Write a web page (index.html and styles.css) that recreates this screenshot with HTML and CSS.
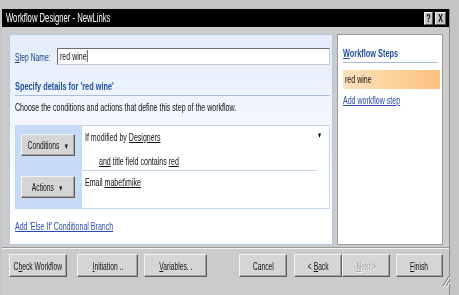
FILE: index.html
```html
<!DOCTYPE html>
<html lang="en">
<head>
  <meta charset="UTF-8" />
  <title>Workflow Designer - NewLinks</title>
  <link rel="stylesheet" href="styles.css">
</head>
<body>
  <div class="window">
    <div class="titlebar">
      <span class="title"><span class="sq">Workflow Designer - NewLinks</span></span>
      <span class="cap-btn cap-help"><span class="sq">?</span></span>
      <span class="cap-btn cap-close"><span class="sq">X</span></span>
    </div>

    <div class="client">
      <div class="panes">
        <div class="main-pane">
          <div class="step-row">
            <label class="step-label"><span class="sq"><u>S</u>tep Name:</span></label>
            <div class="step-input"><span class="sq">red wine<span class="caret"></span></span></div>
          </div>

          <h2 class="section-title"><span class="sq">Specify details for 'red wine'</span></h2>
          <p class="hint"><span class="sq">Choose the conditions and actions that define this step of the workflow.</span></p>

          <div class="rules">
            <div class="rule-row rule-conditions">
              <div class="rule-side">
                <span class="btn rule-btn"><span class="sq">Conditions <span class="tri">▼</span></span></span>
              </div>
              <div class="rule-body">
                <div class="rule-lines">
                  <div class="rule-line"><span class="sq">If modified by <u>Designers</u></span></div>
                  <div class="rule-line rule-sub"><span class="sq"><u>and</u> title field contains <u>red</u></span></div>
                </div>
                <span class="rule-menu"><span class="sq">▼</span></span>
              </div>
            </div>
            <div class="rule-row rule-actions">
              <div class="rule-side">
                <span class="btn rule-btn"><span class="sq">Actions <span class="tri">▼</span></span></span>
              </div>
              <div class="rule-body">
                <div class="rule-line"><span class="sq">Email <u>mabet\mike</u></span></div>
              </div>
            </div>
          </div>

          <a class="link branch-link" href="#"><span class="sq">Add 'Else If' Conditional Branch</span></a>
        </div>

        <div class="side-pane">
          <h2 class="side-title"><span class="sq"><u>W</u>orkflow Steps</span></h2>
          <div class="step-item"><span class="sq">red wine</span></div>
          <a class="link" href="#"><span class="sq">Add workflow step</span></a>
        </div>
      </div>

      <div class="separator"></div>

      <div class="footer">
        <span class="btn btn-check"><span class="sq">C<u>h</u>eck Workflow</span></span>
        <span class="btn btn-init"><span class="sq"><u>I</u>nitiation ..</span></span>
        <span class="btn btn-vars"><span class="sq"><u>V</u>ariables. .</span></span>
        <span class="btn btn-cancel"><span class="sq">Cancel</span></span>
        <span class="btn btn-back"><span class="sq">&lt; <u>B</u>ack</span></span>
        <span class="btn btn-next is-disabled"><span class="sq"><u>N</u>ext &gt;</span></span>
        <span class="btn btn-finish"><span class="sq"><u>F</u>inish</span></span>
      </div>
    </div>

    <svg class="grip" width="9" height="14" viewBox="0 0 9 14">
      <path d="M8 3 L2 13 M8 8 L5 13" stroke="#7a7a7a" stroke-width="1" fill="none"/>
      <path d="M9 4 L3 14 M9 9 L6 14" stroke="#f4f4f4" stroke-width="1" fill="none"/>
    </svg>
  </div>
</body>
</html>
```

FILE: styles.css
```css
html, body {
  margin: 0;
}
body {
  background: #c4c4c4;
  font-family: "Liberation Sans", Arial, sans-serif;
  font-size: 11px;
  color: #111;
}
/* the dialog text is squeezed sideways like the captured screen */
.sq {
  display: inline-block;
  white-space: nowrap;
  transform: scaleX(0.64);
  transform-origin: 0 50%;
}
.btn .sq,
.cap-btn .sq {
  transform-origin: 50% 50%;
}

.window {
  position: relative;
  margin: 9px 0 0 2px;
  width: 447px;
  height: 286px;
  background: #cbcbcb;
  border-right: 1px solid #8c8c8c;
}
.titlebar {
  display: flex;
  align-items: center;
  height: 18px;
  padding: 0 3px 0 4px;
  background: #000;
}
.title {
  flex: 1;
  color: #fff;
  font-size: 12px;
}
.cap-btn {
  display: flex;
  align-items: center;
  justify-content: center;
  height: 13px;
  background: #c6c6c6;
  border: 1px solid;
  border-color: #f2f2f2 #555 #555 #f2f2f2;
  box-sizing: border-box;
  font-weight: bold;
  font-size: 11px;
  color: #000;
}
.cap-help {
  width: 9px;
  margin-right: 2px;
}
.cap-close {
  width: 11px;
}

.client {
  padding: 7px 6px 0 7px;
}
.panes {
  display: flex;
  gap: 4px;
  height: 211px;
}
.main-pane {
  width: 324px;
  box-sizing: border-box;
  padding: 0 2px 0 5px;
  border: 1px solid #b4c7e7;
  background: linear-gradient(#e3ecfb, #f4f7fd 45%, #ffffff 80%);
}
.step-row {
  display: flex;
  align-items: center;
  margin-top: 13px;
}
.step-label {
  width: 42px;
  font-size: 10.5px;
  color: #1d3f86;
}
.step-input {
  flex: 1;
  height: 17px;
  box-sizing: border-box;
  padding: 1px 2px;
  line-height: 13px;
  background: #fff;
  border: 1px solid #6d6d6d;
  border-bottom-color: #c8c8c8;
  border-right-color: #c8c8c8;
}
.caret {
  display: inline-block;
  width: 1px;
  height: 12px;
  background: #000;
  vertical-align: -2px;
}
.section-title {
  margin: 14px 0 0;
  padding-bottom: 2px;
  line-height: 14px;
  font-size: 11.5px;
  font-weight: bold;
  color: #1e4f9e;
  border-bottom: 1px solid #a9bde0;
}
.hint {
  margin: 5px 0 0;
  line-height: 13px;
}
.rules {
  margin-top: 11px;
  border: 1px solid #c3d4ee;
  background: #fff;
}
.rule-row {
  display: flex;
}
.rule-conditions {
  height: 44px;
}
.rule-actions {
  height: 38px;
}
.rule-side {
  width: 66px;
  padding-left: 5px;
  box-sizing: border-box;
  background: #c8dbf6;
}
.rule-conditions .rule-side {
  padding-top: 8px;
}
.rule-actions .rule-side {
  padding-top: 6px;
}
.rule-body {
  flex: 1;
  display: flex;
  padding: 5px 4px 0 3px;
}
.rule-actions .rule-body {
  margin-right: 12px;
  border-top: 1px solid #c3d4ee;
}
.rule-lines {
  flex: 1;
}
.rule-line {
  line-height: 13px;
}
.rule-sub {
  margin-top: 11px;
  padding-left: 14px;
}
.rule-menu {
  font-size: 8px;
  line-height: 10px;
  color: #000;
}
.link {
  display: block;
  color: #2a4cb2;
  line-height: 13px;
}
.link .sq {
  text-decoration: underline;
}
.branch-link {
  margin-top: 11px;
}

.side-pane {
  width: 106px;
  box-sizing: border-box;
  padding: 11px 4px 0 5px;
  background: #fff;
  border: 1px solid #9d9d9d;
}
.side-title {
  margin: 0;
  padding-bottom: 2px;
  line-height: 14px;
  font-size: 11.5px;
  font-weight: bold;
  color: #1e4f9e;
  border-bottom: 1px solid #a9bde0;
}
.step-item {
  margin: 7px -2px 5px 0;
  height: 19px;
  padding-left: 2px;
  line-height: 19px;
  background: linear-gradient(to right, #fde2bd, #fbc27c);
}

.separator {
  margin: 2px -6px 0 -7px;
  border-top: 1px solid #9a9a9a;
  border-bottom: 1px solid #f4f4f4;
}
.footer {
  display: flex;
  margin-top: 5px;
  font-size: 10.5px;
}
.btn {
  display: inline-flex;
  align-items: center;
  justify-content: center;
  box-sizing: border-box;
  height: 23px;
  background: #d5d5d5;
  border: 1px solid;
  border-color: #f4f4f4 #5c5c5c #5c5c5c #f4f4f4;
  box-shadow: inset -1px -1px 0 #a4a4a4;
  color: #111;
  white-space: nowrap;
}
.rule-btn {
  width: 54px;
  height: 22px;
  font-size: 10.5px;
}
.tri {
  font-size: 8px;
  margin-left: 4px;
}
.btn-check { width: 58px; }
.btn-init { width: 61px; margin-left: 10px; }
.btn-vars { width: 63px; margin-left: 6px; }
.btn-cancel { width: 48px; margin-left: 32px; }
.btn-back { width: 48px; margin-left: 7px; }
.btn-next { width: 48px; }
.btn-finish { width: 47px; margin-left: 6px; }
.is-disabled {
  color: #a3a3a3;
  text-shadow: 1px 1px 0 #f6f6f6;
}
.grip {
  position: absolute;
  right: -1px;
  bottom: 8px;
}
```
